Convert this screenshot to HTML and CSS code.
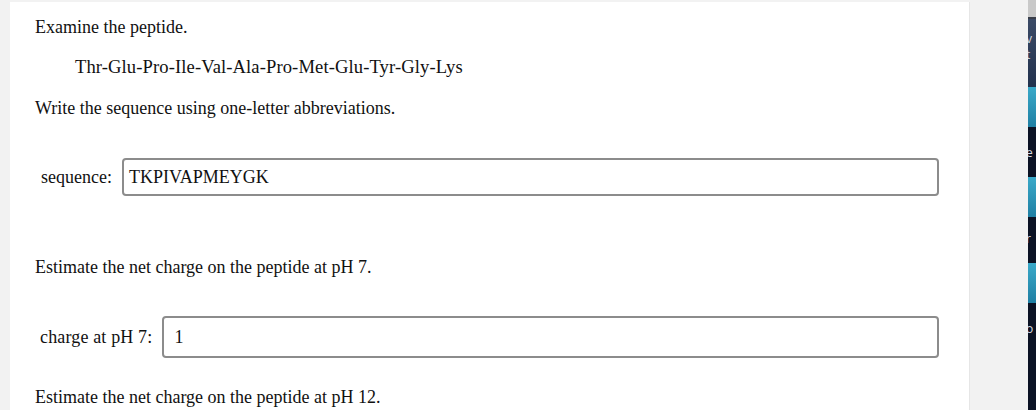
FILE: index.html
```html
<!DOCTYPE html>
<html>
<head>
<meta charset="utf-8">
<link rel="stylesheet" href="styles.css">
</head>
<body>
<div class="page">
  <main class="card">
    <p class="q q-first">Examine the peptide.</p>
    <p class="peptide">Thr-Glu-Pro-Ile-Val-Ala-Pro-Met-Glu-Tyr-Gly-Lys</p>
    <p class="q q-write">Write the sequence using one-letter abbreviations.</p>
    <div class="row row-seq">
      <label class="lbl">sequence:</label>
      <div class="field f-seq">TKPIVAPMEYGK</div>
    </div>
    <p class="q q-est7">Estimate the net charge on the peptide at pH 7.</p>
    <div class="row row-ch">
      <label class="lbl lbl-ch">charge at pH 7:</label>
      <div class="field f-ch">1</div>
    </div>
    <p class="q q-est12">Estimate the net charge on the peptide at pH 12.</p>
  </main>
  <aside class="side">
    <div class="s-top"></div>
    <div class="s-line"></div>
    <div class="s-head"><span class="s-txt">v</span><span class="s-txt">t</span></div>
    <div class="s-teal t1"></div>
    <div class="s-gap g1"><span class="s-txt">e</span></div>
    <div class="s-teal t2"></div>
    <div class="s-gap g2"><span class="s-txt">r</span></div>
    <div class="s-teal t3"></div>
    <div class="s-gap g3"><span class="s-txt">o</span></div>
  </aside>
</div>
</body>
</html>
```

FILE: styles.css
```css
html, body {
  margin: 0;
  padding: 0;
  background: #f2f2f2;
  width: 1036px;
  height: 410px;
  overflow: hidden;
}
.page {
  display: flex;
  height: 410px;
}
.card {
  background: #ffffff;
  width: 960px;
  margin-left: 10px;
  margin-top: 2px;
  padding: 14px 30px 0 25px;
  box-sizing: border-box;
  font-family: "Liberation Serif", "Times New Roman", serif;
  font-size: 18px;
  line-height: 22px;
  color: #111;
  border-right: 1px solid #e6e6e6;
}
.q, .peptide { margin: 0; }
.peptide { margin-top: 18px; padding-left: 40px; font-size: 18.6px; letter-spacing: 0.1px; }
.q-write { margin-top: 19px; }
.row {
  display: flex;
  align-items: center;
  padding-left: 6px;
}
.row-seq { margin-top: 39px; }
.row-ch { margin-top: 38px; padding-left: 5px; }
.lbl { margin-right: 10px; }
.lbl-ch { margin-right: 10px; letter-spacing: 0.15px; }
.field {
  flex: 1;
  border: 2px solid #8c8c8c;
  border-radius: 4px;
  box-sizing: border-box;
  padding: 0 5px;
  display: flex;
  align-items: center;
}
.f-seq { height: 38px; }
.f-ch { height: 42px; padding-left: 10px; }
.q-est7 { margin-top: 60px; }
.q-est12 { margin-top: 28px; }

.side {
  margin-left: auto;
  width: 8px;
  background: #0b1224;
  display: flex;
  flex-direction: column;
  font-family: "Open Sans", sans-serif;
  font-size: 12px;
  color: #d8dbe0;
  overflow: hidden;
}
.s-top { height: 17px; background: #c9c9c9; }
.s-line { height: 2px; background: #3a3f4a; }
.s-head {
  height: 68px;
  background: linear-gradient(#3b4a66, #22324e);
  display: flex;
  flex-direction: column;
  padding-top: 12px;
  line-height: 16px;
  box-sizing: border-box;
}
.s-txt { margin-left: -2px; }
.s-teal { height: 40px; background: linear-gradient(#3aa9c9, #1f7fa3); }
.s-gap { line-height: 16px; box-sizing: border-box; }
.g1 { height: 50px; padding-top: 18px; }
.g2 { height: 46px; padding-top: 14px; }
.g3 { flex: 1; padding-top: 18px; }
```
